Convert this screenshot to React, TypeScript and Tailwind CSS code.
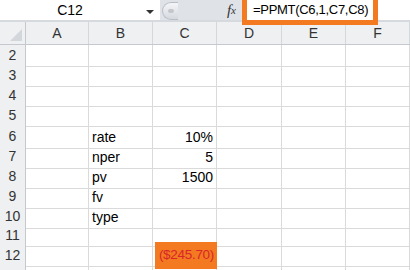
const font = { fontFamily: '"Liberation Sans", Arial, sans-serif' };

type Cell = { text: string; align?: 'left' | 'right'; hl?: boolean };

const data: Record<number, Record<string, Cell>> = {
  6: { B: { text: 'rate' }, C: { text: '10%', align: 'right' } },
  7: { B: { text: 'nper' }, C: { text: '5', align: 'right' } },
  8: { B: { text: 'pv' }, C: { text: '1500', align: 'right' } },
  9: { B: { text: 'fv' } },
  10: { B: { text: 'type' } },
  12: { C: { text: '($245.70)', align: 'right', hl: true } },
};

const cols = ['A', 'B', 'C', 'D', 'E', 'F'];
const rows = [2, 3, 4, 5, 6, 7, 8, 9, 10, 11, 12, 13];
const gridCols = 'grid grid-cols-[26px_63px_64px_64px_65px_64px_64px]';

function FormulaBar() {
  return (
    <div className="relative flex h-[22px] border-b-2 border-[#d6d9de] bg-[#dfe3e8]">
      {/* Name box */}
      <div className="relative flex w-[160px] items-center justify-center bg-white text-[14px] text-black">
        <span className="-ml-[20px]">C12</span>
        <span className="absolute left-[146px] top-[10px] h-0 w-0 border-x-[4px] border-t-[4px] border-x-transparent border-t-[#333]" />
      </div>
      {/* grip */}
      <div className="mt-[2px] ml-[2px] h-[18px] w-[16px] rounded-l-full border border-r-0 border-[#b9bec6] bg-gradient-to-b from-[#f4f5f7] to-[#d5d9df]">
        <div className="ml-[5px] mt-[6px] h-[4px] w-[6px] rounded-full bg-[#c3c7cc]" />
      </div>
      <div className="flex-1" />
      <div
        className="mr-[6px] flex items-center text-[15px] italic text-[#333]"
        style={{ fontFamily: '"Liberation Serif", serif' }}
      >
        f<span className="text-[11px]">x</span>
      </div>
      <div className="w-[168px] bg-white" />
      {/* highlighted formula */}
      <div className="absolute left-[242px] top-0 z-10 h-[25px] w-[136px] bg-[#f37a20] px-[5px]">
        <div className="flex h-[20px] items-center bg-white pl-[6px] text-[13px] tracking-[-0.3px] text-black">
          =PPMT(C6,1,C7,C8)
        </div>
      </div>
    </div>
  );
}

export default function App() {
  return (
    <div className="h-[270px] w-[410px] overflow-hidden bg-white" style={font}>
      <FormulaBar />
      {/* Column headers */}
      <div className={`${gridCols} h-[23px] border-b border-[#c5c9cf] bg-[#eef0f2]`}>
        <div className="relative border-r border-[#c5c9cf]">
          <div className="absolute bottom-[3px] right-[3px] h-[12px] w-[12px] bg-[#d3d6da] [clip-path:polygon(100%_0,100%_100%,0_100%)]" />
        </div>
        {cols.map((c) => (
          <div key={c} className="flex items-center justify-center border-r border-[#d4d7db] text-[14px] text-[#333]">
            {c}
          </div>
        ))}
      </div>
      {/* Rows */}
      {rows.map((r) => (
        <div key={r} className={`${gridCols} h-[20px]`}>
          <div className="flex items-center justify-center border-r border-b border-[#c5c9cf] bg-[#eef0f2] text-[14px] text-[#333]">
            {r < 13 ? r : ''}
          </div>
          {cols.map((c) => {
            const cell = data[r]?.[c];
            return (
              <div
                key={c}
                className={`relative flex items-center border-r border-b border-[#dadada] px-[3px] pt-[2px] text-[14px] text-black ${
                  cell?.align === 'right' ? 'justify-end' : 'justify-start'
                }`}
              >
                {cell && !cell.hl && <span>{cell.text}</span>}
                {cell?.hl && (
                  <div className="absolute -top-[3px] left-[2px] right-[-1px] z-10 flex h-[27px] items-center justify-end bg-[#f37a20] pr-[3px] text-[13.5px] tracking-[-0.3px] text-[#d8262a]">
                    {cell.text}
                  </div>
                )}
              </div>
            );
          })}
        </div>
      ))}
    </div>
  );
}
